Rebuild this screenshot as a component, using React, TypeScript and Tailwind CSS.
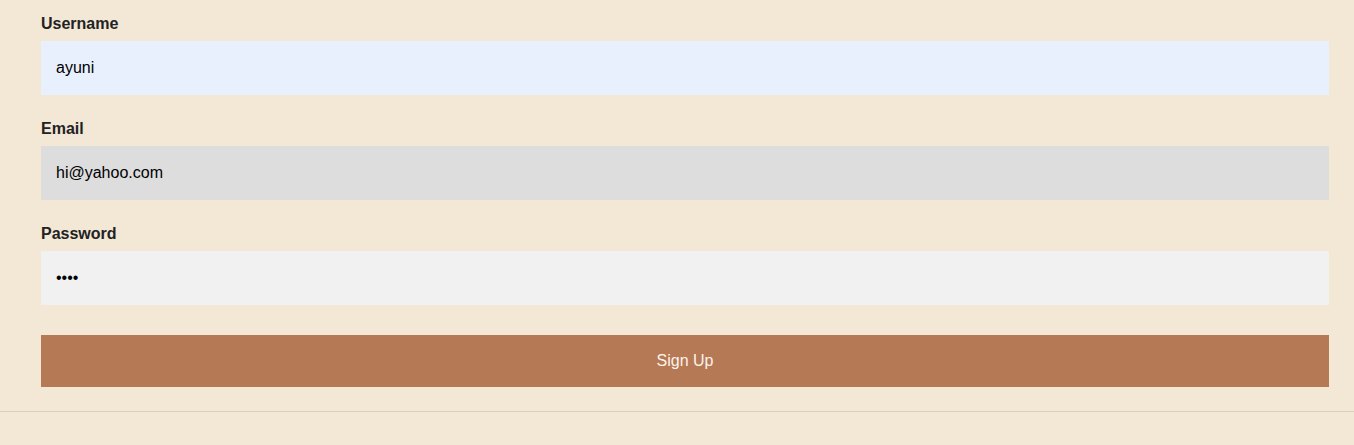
import { useState } from "react";

type FieldProps = {
  label: string;
  type: string;
  value: string;
  bg: string;
};

function Field({ label, type, value, bg }: FieldProps) {
  const [val, setVal] = useState(value);
  return (
    <div className="mb-[24px]">
      <label className="block pt-[1px] mb-[8px] text-[16px] leading-[18px] font-bold text-[#222222]">{label}</label>
      <input
        type={type}
        value={val}
        onChange={(e) => setVal(e.target.value)}
        className={`block w-full h-[54px] px-[15px] text-[16px] text-black outline-none border-0 ${bg}`}
      />
    </div>
  );
}

export default function App() {
  return (
    <div className="min-h-[445px] bg-[#f3e7d6] font-['Liberation_Sans',Arial,sans-serif]">
      <form className="px-[41px] pt-[14px] pb-[24px] pr-[25px]" onSubmit={(e) => e.preventDefault()}>
        <Field label="Username" type="text" value="ayuni" bg="bg-[#e8f0fe]" />
        <Field label="Email" type="email" value="hi@yahoo.com" bg="bg-[#dddddd]" />
        <div className="mb-[30px]">
          <label className="block pt-[1px] mb-[8px] text-[16px] leading-[18px] font-bold text-[#222222]">Password</label>
          <input
            type="password"
            defaultValue="abcd"
            className="block w-full h-[54px] px-[15px] text-[16px] text-black outline-none border-0 bg-[#f1f1f1]"
          />
        </div>
        <button
          type="submit"
          className="block w-full h-[52px] bg-[#b57956] text-[16px] text-[#fdf3ea]"
        >
          Sign Up
        </button>
      </form>
      <div className="border-t border-[#d8cfc2]" />
    </div>
  );
}
